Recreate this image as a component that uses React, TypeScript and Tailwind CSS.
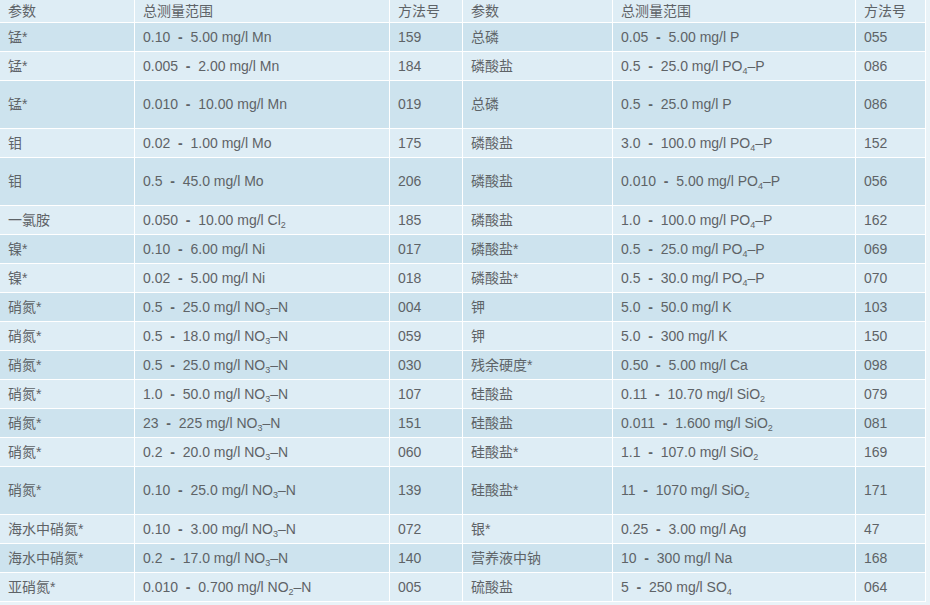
import type { ReactNode } from "react"

type Row = {
  left: [ReactNode, ReactNode, string]
  right: [ReactNode, ReactNode, string]
  tall?: boolean
}

const Sub = ({ children }: { children: ReactNode }) => (
  <span className="text-[9px] relative top-[3px]">{children}</span>
)

const range = (from: string, to: string, unit: ReactNode) => (
  <span className="whitespace-pre">
    {from}  <span className="font-bold">-</span>  {to} {unit}
  </span>
)

const no3 = (
  <>
    mg/l NO<Sub>3</Sub>–N
  </>
)
const po4 = (
  <>
    mg/l PO<Sub>4</Sub>–P
  </>
)
const sio2 = (
  <>
    mg/l SiO<Sub>2</Sub>
  </>
)

const rows: Row[] = [
  { left: ["锰*", range("0.10", "5.00", "mg/l Mn"), "159"], right: ["总磷", range("0.05", "5.00", "mg/l P"), "055"] },
  { left: ["锰*", range("0.005", "2.00", "mg/l Mn"), "184"], right: ["磷酸盐", range("0.5", "25.0", po4), "086"] },
  { left: ["锰*", range("0.010", "10.00", "mg/l Mn"), "019"], right: ["总磷", range("0.5", "25.0", "mg/l P"), "086"], tall: true },
  { left: ["钼", range("0.02", "1.00", "mg/l Mo"), "175"], right: ["磷酸盐", range("3.0", "100.0", po4), "152"] },
  { left: ["钼", range("0.5", "45.0", "mg/l Mo"), "206"], right: ["磷酸盐", range("0.010", "5.00", po4), "056"], tall: true },
  {
    left: ["一氯胺", range("0.050", "10.00", <>mg/l Cl<Sub>2</Sub></>), "185"],
    right: ["磷酸盐", range("1.0", "100.0", po4), "162"],
  },
  { left: ["镍*", range("0.10", "6.00", "mg/l Ni"), "017"], right: ["磷酸盐*", range("0.5", "25.0", po4), "069"] },
  { left: ["镍*", range("0.02", "5.00", "mg/l Ni"), "018"], right: ["磷酸盐*", range("0.5", "30.0", po4), "070"] },
  { left: ["硝氮*", range("0.5", "25.0", no3), "004"], right: ["钾", range("5.0", "50.0", "mg/l K"), "103"] },
  { left: ["硝氮*", range("0.5", "18.0", no3), "059"], right: ["钾", range("5.0", "300", "mg/l K"), "150"] },
  { left: ["硝氮*", range("0.5", "25.0", no3), "030"], right: ["残余硬度*", range("0.50", "5.00", "mg/l Ca"), "098"] },
  { left: ["硝氮*", range("1.0", "50.0", no3), "107"], right: ["硅酸盐", range("0.11", "10.70", sio2), "079"] },
  { left: ["硝氮*", range("23", "225", no3), "151"], right: ["硅酸盐", range("0.011", "1.600", sio2), "081"] },
  { left: ["硝氮*", range("0.2", "20.0", no3), "060"], right: ["硅酸盐*", range("1.1", "107.0", sio2), "169"] },
  { left: ["硝氮*", range("0.10", "25.0", no3), "139"], right: ["硅酸盐*", range("11", "1070", sio2), "171"], tall: true },
  { left: ["海水中硝氮*", range("0.10", "3.00", no3), "072"], right: ["银*", range("0.25", "3.00", "mg/l Ag"), "47"] },
  { left: ["海水中硝氮*", range("0.2", "17.0", no3), "140"], right: ["营养液中钠", range("10", "300", "mg/l Na"), "168"] },
  {
    left: ["亚硝氮*", range("0.010", "0.700", <>mg/l NO<Sub>2</Sub>–N</>), "005"],
    right: ["硫酸盐", range("5", "250", <>mg/l SO<Sub>4</Sub></>), "064"],
  },
]

const cols = "grid grid-cols-[134px_254px_72px_149px_242px_69px] gap-x-px"

export default function App() {
  return (
    <div
      className="w-[930px] h-[605px] bg-[#e9f3f8] overflow-hidden text-[14px] text-[#5e6367]"
      style={{ fontFamily: '"Liberation Sans", "Noto Sans CJK SC", sans-serif' }}
    >
      <div className="w-[926px] bg-white flex flex-col gap-y-px pb-px">
        <div className={cols}>
          {["参数", "总测量范围", "方法号", "参数", "总测量范围", "方法号"].map((h, i) => (
            <div key={i} className="h-[22px] bg-[#deedf5] px-2 flex items-center">
              {h}
            </div>
          ))}
        </div>
        {rows.map((r, i) => {
          const bg = i % 2 === 0 ? "bg-[#cde3ee]" : "bg-[#deedf5]"
          const h = r.tall ? "h-[47px]" : "h-[28px]"
          return (
            <div key={i} className={cols}>
              {[...r.left, ...r.right].map((c, j) => (
                <div key={j} className={`${bg} ${h} px-2 flex items-center`}>
                  {c}
                </div>
              ))}
            </div>
          )
        })}
      </div>
    </div>
  )
}
